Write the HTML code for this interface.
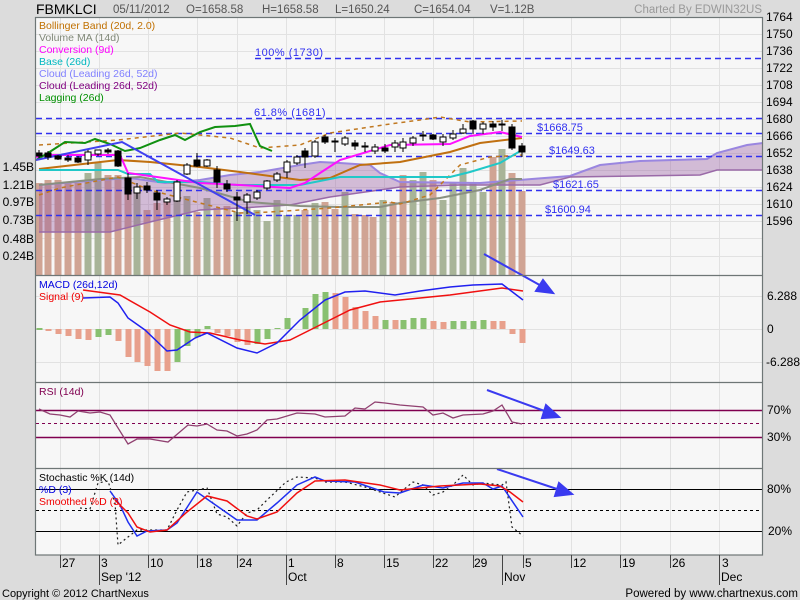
<!DOCTYPE html>
<html><head><meta charset="utf-8"><style>
html,body{margin:0;padding:0;background:#dcdcdc;}
svg{display:block;font-family:"Liberation Sans",sans-serif;}
</style></head><body>
<svg width="800" height="600" viewBox="0 0 800 600" xmlns="http://www.w3.org/2000/svg">
<rect x="0" y="0" width="800" height="600" fill="#dcdcdc"/>
<rect x="36" y="17" width="727" height="538" fill="#f7f7f7"/>
<g stroke="#e2e2e2" stroke-width="1">
<path d="M60.5 17V555M99.5 17V555M148.5 17V555M197.5 17V555M237.5 17V555M286.5 17V555M335.5 17V555M384.5 17V555M433.5 17V555M473.5 17V555M523.5 17V555M571.5 17V555M620.5 17V555M670.5 17V555M719.5 17V555"/>
<path d="M36 34.5H763M36 51.5H763M36 68.5H763M36 85.5H763M36 102.5H763M36 119.5H763M36 136.5H763M36 153.5H763M36 170.5H763M36 187.5H763M36 204.5H763M36 221.5H763M36 238.5H763M36 256.5H763"/>
<path d="M36 296.5H763M36 329.5H763M36 362.5H763"/>
</g>
<g>
<rect x="35.5" y="183" width="7" height="92" fill="#d0a494"/><rect x="44.5" y="180" width="7" height="95" fill="#d0a494"/><rect x="54.5" y="180" width="7" height="95" fill="#d0a494"/><rect x="64.5" y="183" width="7" height="92" fill="#d0a494"/><rect x="74.5" y="183" width="7" height="92" fill="#d0a494"/><rect x="84.5" y="173" width="7" height="102" fill="#a8b498"/><rect x="94.5" y="163" width="7" height="112" fill="#a8b498"/><rect x="104.5" y="175" width="7" height="100" fill="#d0a494"/><rect x="114.5" y="175" width="7" height="100" fill="#d0a494"/><rect x="124.5" y="185" width="7" height="90" fill="#d0a494"/><rect x="133.5" y="190" width="7" height="85" fill="#a8b498"/><rect x="143.5" y="210" width="7" height="65" fill="#d0a494"/><rect x="153.5" y="203" width="7" height="72" fill="#d0a494"/><rect x="163.5" y="200" width="7" height="75" fill="#d0a494"/><rect x="173.5" y="195" width="7" height="80" fill="#a8b498"/><rect x="183.5" y="196" width="7" height="79" fill="#a8b498"/><rect x="193.5" y="212" width="7" height="63" fill="#d0a494"/><rect x="203.5" y="198" width="7" height="77" fill="#a8b498"/><rect x="213.5" y="208" width="7" height="67" fill="#d0a494"/><rect x="223.5" y="206" width="7" height="69" fill="#d0a494"/><rect x="233.5" y="212" width="7" height="63" fill="#a8b498"/><rect x="243.5" y="208" width="7" height="67" fill="#a8b498"/><rect x="253.5" y="210" width="7" height="65" fill="#a8b498"/><rect x="263.5" y="221" width="7" height="54" fill="#a8b498"/><rect x="273.5" y="200" width="7" height="75" fill="#a8b498"/><rect x="283.5" y="215" width="7" height="60" fill="#a8b498"/><rect x="293.5" y="215" width="7" height="60" fill="#a8b498"/><rect x="301.5" y="210" width="7" height="65" fill="#d0a494"/><rect x="311.5" y="203" width="7" height="72" fill="#a8b498"/><rect x="321.5" y="202" width="7" height="73" fill="#d0a494"/><rect x="331.5" y="209" width="7" height="66" fill="#d0a494"/><rect x="341.5" y="192" width="7" height="83" fill="#a8b498"/><rect x="351.5" y="214" width="7" height="61" fill="#d0a494"/><rect x="361.5" y="215" width="7" height="60" fill="#d0a494"/><rect x="369.5" y="217" width="7" height="58" fill="#d0a494"/><rect x="379.5" y="200" width="7" height="75" fill="#a8b498"/><rect x="389.5" y="202" width="7" height="73" fill="#d0a494"/><rect x="399.5" y="175" width="7" height="100" fill="#d0a494"/><rect x="409.5" y="180" width="7" height="95" fill="#a8b498"/><rect x="419.5" y="172" width="7" height="103" fill="#a8b498"/><rect x="429.5" y="180" width="7" height="95" fill="#d0a494"/><rect x="439.5" y="200" width="7" height="75" fill="#a8b498"/><rect x="449.5" y="182" width="7" height="93" fill="#a8b498"/><rect x="459.5" y="168" width="7" height="107" fill="#a8b498"/><rect x="469.5" y="182" width="7" height="93" fill="#a8b498"/><rect x="479.5" y="192" width="7" height="83" fill="#a8b498"/><rect x="489.5" y="157" width="7" height="118" fill="#d0a494"/><rect x="498.5" y="149" width="7" height="126" fill="#a8b498"/><rect x="508.5" y="173" width="7" height="102" fill="#d0a494"/><rect x="518.5" y="191" width="7" height="84" fill="#d0a494"/>
</g>
<path d="M39 185L100 180L130 178L165 183L200 180L230 175L260 172L300 165L320 162L340 163L370 165L380 173L400 182L480 183L570 176L600 165L640 161L707 159L717 153L747 145L763 143L763 170L717 170L700 175L570 177L540 185L460 185L400 187L330 197L290 205L240 208L200 210L150 222L110 232L39 232Z" fill="rgba(150,90,160,0.38)"/>
<path d="M39 185L100 180L130 178L165 183L200 180L230 175L260 172L300 165L320 162L340 163L370 165L380 173L400 182L480 183L570 176L600 165L640 161L707 159L717 153L747 145L763 143" fill="none" stroke="#9a86e0" stroke-width="2"/>
<path d="M39 232L110 232L150 222L200 210L240 208L290 205L330 197L400 187L460 185L540 185L570 177L700 175L717 170L763 170" fill="none" stroke="#9a6aa8" stroke-width="1.5"/>
<g stroke="#3030f0" stroke-width="1.5" stroke-dasharray="6,4" fill="none">
<path d="M255 58.5H763M36 118.5H763M36 133.5H763M36 156.5H763M36 190.5H763M36 215.5H763"/>
</g>
<g fill="#3030f0" font-size="11">
<text x="255" y="56" letter-spacing="0.5">100%   (1730)</text>
<text x="254" y="116" letter-spacing="0.5">61.8%   (1681)</text>
<text x="537" y="131">$1668.75</text>
<text x="549" y="154">$1649.63</text>
<text x="553" y="188">$1621.65</text>
<text x="545" y="213">$1600.94</text>
</g>
<path d="M39 185L100 179L140 177L200 188L250 202L300 206L340 207L380 207L400 203L440 198L480 190L510 179L522 179" fill="none" stroke="#8a9080" stroke-width="2"/>
<path d="M39 145L118 140L180 133L230 138L260 148L300 145L330 133L390 124L420 120L440 117L470 122L522 121" fill="none" stroke="#c07820" stroke-width="1.5" stroke-dasharray="4,4"/>
<path d="M39 195L60 188L118 177L150 190L200 203L240 213L270 212L330 208L390 202L400 204L430 195L460 165L490 157L522 155" fill="none" stroke="#c07820" stroke-width="1.5" stroke-dasharray="4,4"/>
<path d="M39 169L118 160L150 162L200 167L240 172L300 180L330 178L360 165L400 162L450 152L480 143L522 138" fill="none" stroke="#c07010" stroke-width="2"/>
<path d="M39 170L118 170L128 174L150 174L158 182L200 182L237 185L300 185L340 177L450 177L470 172L500 163L522 150" fill="none" stroke="#20c8c8" stroke-width="2"/>
<path d="M36 157L48 155L120 155L128 173L200 183L240 185L290 188L305 183L320 173L340 160L390 145L450 144L470 136L500 132L522 137" fill="none" stroke="#ff10ff" stroke-width="2"/>
<path d="M36 160L48 153L65 142L85 143L95 139L110 144L125 151L140 148L160 140L175 135L185 140L200 132L215 127L235 126L250 124L260 146L272 151" fill="none" stroke="#109010" stroke-width="2"/>
<path d="M36 160L122 142L255 215" fill="none" stroke="#4040f0" stroke-width="2"/>
<g stroke="#000" stroke-width="1">
<path d="M39 150V158M48 151V160M58 155V160M68 155V162M78 156V163M88 150V165M98 150V156M108 148V154M118 150V167M128 173V200M137 183V199M147 182V193M157 190V210M167 197V205M177 180V202M187 163V175M197 153V167M207 159V167M217 166V188M227 180V192M237 192V221M247 193V214M257 190V200M267 180V190M277 172V182M287 160V178M297 155V165M305 148V168M315 140V158M325 135V144M335 138V152M345 136V146M355 140V150M365 142V152M375 144V154M385 144V153M395 140V152M403 138V152M413 136V146M423 131V141M433 134V140M443 134V146M453 130V140M463 124V134M473 120V134M483 122V134M493 121V131M502 120V131M512 124V150M522 143V157"/>
</g>
<g stroke="#000" stroke-width="1">
<rect x="36" y="153" width="6" height="3" fill="#000"/><rect x="45" y="153" width="6" height="4" fill="#000"/><rect x="55" y="156" width="6" height="3" fill="#000"/><rect x="65" y="158" width="6" height="2" fill="#000"/><rect x="75" y="158" width="6" height="4" fill="#000"/><rect x="85" y="152" width="6" height="8" fill="#fff"/><rect x="95" y="150" width="6" height="4" fill="#fff"/><rect x="105" y="150" width="6" height="2" fill="#000"/><rect x="115" y="151" width="6" height="15" fill="#000"/><rect x="125" y="178" width="6" height="16" fill="#000"/><rect x="134" y="187" width="6" height="6" fill="#fff"/><rect x="144" y="186" width="6" height="4" fill="#000"/><rect x="154" y="193" width="6" height="7" fill="#000"/><rect x="164" y="199" width="6" height="3" fill="#fff"/><rect x="174" y="182" width="6" height="19" fill="#fff"/><rect x="184" y="165" width="6" height="9" fill="#fff"/><rect x="194" y="160" width="6" height="6" fill="#000"/><rect x="204" y="160" width="6" height="6" fill="#fff"/><rect x="214" y="170" width="6" height="12" fill="#000"/><rect x="224" y="184" width="6" height="5" fill="#000"/><rect x="234" y="197" width="6" height="3" fill="#000"/><rect x="244" y="195" width="6" height="7" fill="#fff"/><rect x="254" y="192" width="6" height="6" fill="#fff"/><rect x="264" y="181" width="6" height="7" fill="#fff"/><rect x="274" y="174" width="6" height="6" fill="#fff"/><rect x="284" y="162" width="6" height="10" fill="#fff"/><rect x="294" y="157" width="6" height="6" fill="#fff"/><rect x="302" y="151" width="6" height="6" fill="#000"/><rect x="312" y="142" width="6" height="14" fill="#fff"/><rect x="322" y="137" width="6" height="5" fill="#000"/><rect x="332" y="141" width="6" height="1" fill="#000"/><rect x="342" y="138" width="6" height="6" fill="#fff"/><rect x="352" y="143" width="6" height="3" fill="#000"/><rect x="362" y="146" width="6" height="1" fill="#000"/><rect x="372" y="147" width="6" height="4" fill="#fff"/><rect x="382" y="148" width="6" height="3" fill="#000"/><rect x="392" y="143" width="6" height="4" fill="#fff"/><rect x="400" y="142" width="6" height="6" fill="#fff"/><rect x="410" y="138" width="6" height="5" fill="#fff"/><rect x="420" y="135" width="6" height="1" fill="#000"/><rect x="430" y="135" width="6" height="4" fill="#000"/><rect x="440" y="137" width="6" height="5" fill="#fff"/><rect x="450" y="134" width="6" height="4" fill="#fff"/><rect x="460" y="129" width="6" height="4" fill="#fff"/><rect x="470" y="121" width="6" height="8" fill="#000"/><rect x="480" y="124" width="6" height="5" fill="#fff"/><rect x="490" y="124" width="6" height="3" fill="#000"/><rect x="499" y="124" width="6" height="1" fill="#000"/><rect x="509" y="127" width="6" height="21" fill="#000"/><rect x="519" y="146" width="6" height="6" fill="#000"/>
</g>
<g fill="#e8a08c">
<rect x="45.5" y="329" width="6" height="2"/><rect x="55.5" y="329" width="6" height="5"/><rect x="65.5" y="329" width="6" height="7"/><rect x="75.5" y="329" width="6" height="10"/><rect x="85.5" y="329" width="6" height="11"/><rect x="115.5" y="329" width="6" height="12"/><rect x="125.5" y="329" width="6" height="28"/><rect x="134.5" y="329" width="6" height="33"/><rect x="144.5" y="329" width="6" height="37"/><rect x="154.5" y="329" width="6" height="42"/><rect x="164.5" y="329" width="6" height="42"/><rect x="214.5" y="329" width="6" height="4"/><rect x="224.5" y="329" width="6" height="7"/><rect x="234.5" y="329" width="6" height="13"/><rect x="244.5" y="329" width="6" height="16"/><rect x="332.5" y="293" width="6" height="36"/><rect x="342.5" y="297" width="6" height="32"/><rect x="352.5" y="307" width="6" height="22"/><rect x="362.5" y="311" width="6" height="18"/><rect x="372.5" y="316" width="6" height="13"/><rect x="392.5" y="320" width="6" height="9"/><rect x="430.5" y="321" width="6" height="8"/><rect x="440.5" y="322" width="6" height="7"/><rect x="490.5" y="321" width="6" height="8"/><rect x="499.5" y="321" width="6" height="8"/><rect x="509.5" y="329" width="6" height="5"/><rect x="519.5" y="329" width="6" height="14"/>
</g>
<g fill="#88c070">
<rect x="36.5" y="328" width="6" height="2"/><rect x="95.5" y="329" width="6" height="8"/><rect x="105.5" y="329" width="6" height="6"/><rect x="174.5" y="329" width="6" height="33"/><rect x="184.5" y="329" width="6" height="17"/><rect x="194.5" y="329" width="6" height="8"/><rect x="204.5" y="326" width="6" height="3"/><rect x="254.5" y="329" width="6" height="15"/><rect x="264.5" y="329" width="6" height="10"/><rect x="274.5" y="328" width="6" height="1"/><rect x="284.5" y="318" width="6" height="11"/><rect x="302.5" y="308" width="6" height="21"/><rect x="312.5" y="294" width="6" height="35"/><rect x="322.5" y="292" width="6" height="37"/><rect x="382.5" y="320" width="6" height="9"/><rect x="400.5" y="320" width="6" height="9"/><rect x="410.5" y="318" width="6" height="11"/><rect x="420.5" y="318" width="6" height="11"/><rect x="450.5" y="321" width="6" height="8"/><rect x="460.5" y="321" width="6" height="8"/><rect x="470.5" y="321" width="6" height="8"/><rect x="480.5" y="320" width="6" height="9"/>
</g>
<path d="M83 290L120 295L150 312L170 325L190 332L210 333L240 340L265 344L290 340L320 325L350 310L380 302L400 300L450 295L502 288L523 291" fill="none" stroke="#f01010" stroke-width="1.5"/>
<path d="M83 298L110 297L118 303L128 318L145 330L167 351L177 350L195 338L207 333L237 348L257 353L277 343L300 320L325 300L345 292L365 291L395 295L420 291L450 287L473 285L502 284L523 300" fill="none" stroke="#2020f0" stroke-width="1.5"/>
<g stroke="#800050" stroke-width="1.5" fill="none">
<path d="M36 410.5H763M36 437.5H763"/>
<path d="M36 423.5H763" stroke-width="1" stroke-dasharray="3,3"/>
<path d="M39 409L50 414L60 415L70 417L78 411L90 413L100 412L110 415L128 444L137 439L150 439L168 442L188 425L197 426L207 424L217 430L227 431L237 436L247 434L257 430L267 420L277 419L297 413L315 414L325 417L345 416L355 408L365 409L375 402L385 403L400 405L423 407L433 415L443 413L453 418L463 415L483 414L493 411L502 405L512 422L522 424" stroke="#904070" stroke-width="1.3"/>
</g>
<g fill="none">
<path d="M36 489.5H763M36 531.5H763" stroke="#000" stroke-width="1"/>
<path d="M36 510.5H763" stroke="#000" stroke-width="1" stroke-dasharray="3,3"/>
<path d="M80 508L90 509L98 483L108 481L115 503L118 545L128 537L137 530L167 530L177 510L187 492L207 488L217 514L227 517L237 526L247 513L257 510L267 500L286 482L297 477L315 478L325 482L345 482L365 487L395 497L403 490L413 482L423 485L433 495L443 492L453 485L463 475L473 485L483 483L502 485L506 482L512 527L523 536" stroke="#202020" stroke-width="1.2" stroke-dasharray="2,3"/>
<path d="M110 491L120 505L128 522L137 536L147 531L167 530L177 523L197 492L217 506L237 520L257 520L277 503L297 485L315 477L325 481L355 482L384 492L400 493L423 485L443 488L463 483L483 483L493 489L502 486L523 517" stroke="#2030f0" stroke-width="1.5"/>
<path d="M115 500L128 513L137 527L150 532L167 530L187 512L207 496L227 501L247 516L257 519L277 512L297 493L315 481L345 480L380 485L400 490L440 486L480 484L500 486L510 492L523 502" stroke="#f01010" stroke-width="1.5"/>
</g>
<g stroke="#3a3af0" stroke-width="2" fill="#3a3af0">
<path d="M484 254L545 288" fill="none"/><polygon points="553,293 536,291 543,280"/>
<path d="M487 390L550 413" fill="none"/><polygon points="559,417 542,418 546,405"/>
<path d="M497 469L563 491" fill="none"/><polygon points="572,494 555,496 559,483"/>
</g>
<g stroke="#6e7676" stroke-width="1.2" fill="none">
<rect x="35.5" y="17.5" width="727" height="537.5"/>
<path d="M36 275.5H763M36 382.5H763M36 468.5H763"/>
</g>
<g font-size="10.5">
<text x="39" y="29" fill="#c07000">Bollinger Band (20d, 2.0)</text>
<text x="39" y="41" fill="#808878">Volume MA (14d)</text>
<text x="39" y="53" fill="#ff00ff">Conversion (9d)</text>
<text x="39" y="65" fill="#00b8c0">Base (26d)</text>
<text x="39" y="77" fill="#8080ff">Cloud (Leading 26d, 52d)</text>
<text x="39" y="89" fill="#800080">Cloud (Leading 26d, 52d)</text>
<text x="39" y="101" fill="#009000">Lagging (26d)</text>
<text x="39" y="288" fill="#0000e0">MACD (26d,12d)</text>
<text x="39" y="300" fill="#f00000">Signal (9)</text>
<text x="39" y="395" fill="#800050">RSI (14d)</text>
<text x="39" y="481" fill="#000">Stochastic %K (14d)</text>
<text x="39" y="493" fill="#0000e0">%D (3)</text>
<text x="39" y="505" fill="#f00000">Smoothed %D (3)</text>
</g>
<text x="36" y="14" font-size="14" fill="#000">FBMKLCI</text>
<g font-size="11.5" fill="#555">
<text x="113" y="13">05/11/2012</text>
<text x="186" y="13">O=1658.58</text>
<text x="262" y="13">H=1658.58</text>
<text x="335" y="13">L=1650.24</text>
<text x="414" y="13">C=1654.04</text>
<text x="490" y="13">V=1.12B</text>
</g>
<text x="762" y="13" font-size="11.5" fill="#999" text-anchor="end">Charted By EDWIN32US</text>
<g font-size="12" fill="#000">
<text x="766" y="21">1764</text><text x="766" y="38">1750</text><text x="766" y="55">1736</text><text x="766" y="72">1722</text><text x="766" y="89">1708</text><text x="766" y="106">1694</text><text x="766" y="123">1680</text><text x="766" y="140">1666</text><text x="766" y="157">1652</text><text x="766" y="174">1638</text><text x="766" y="191">1624</text><text x="766" y="208">1610</text><text x="766" y="225">1596</text>
<text x="767" y="300">6.288</text><text x="767" y="333">0</text><text x="766" y="366">-6.288</text>
<text x="767" y="414">70%</text><text x="767" y="441">30%</text>
<text x="767" y="493">80%</text><text x="768" y="535">20%</text>
</g>
<g font-size="12" fill="#000" text-anchor="end">
<text x="34" y="171">1.45B</text><text x="34" y="189">1.21B</text><text x="34" y="206">0.97B</text><text x="34" y="224">0.73B</text><text x="34" y="243">0.48B</text><text x="34" y="260">0.24B</text>
</g>
<g stroke="#444" stroke-width="1">
<path d="M60.5 555V568M99.5 555V585M148.5 555V568M197.5 555V568M237.5 555V568M286.5 555V585M335.5 555V568M384.5 555V568M433.5 555V568M473.5 555V568M502.5 555V585M523.5 555V568M571.5 555V568M620.5 555V568M670.5 555V568M719.5 555V585"/>
</g>
<g font-size="12" fill="#000">
<text x="62" y="567">27</text><text x="101" y="567">3</text><text x="150" y="567">10</text><text x="199" y="567">18</text><text x="239" y="567">24</text><text x="288" y="567">1</text><text x="337" y="567">8</text><text x="386" y="567">15</text><text x="435" y="567">22</text><text x="474" y="567">29</text><text x="525" y="567">5</text><text x="573" y="567">12</text><text x="622" y="567">19</text><text x="672" y="567">26</text><text x="722" y="567">3</text>
<text x="101" y="581">Sep '12</text><text x="288" y="581">Oct</text><text x="504" y="581">Nov</text><text x="721" y="581">Dec</text>
</g>
<text x="2" y="597" font-size="11" fill="#000">Copyright © 2012 ChartNexus</text>
<text x="798" y="597" font-size="11.5" fill="#000" text-anchor="end">Powered by www.chartnexus.com</text>
</svg>
</body></html>
